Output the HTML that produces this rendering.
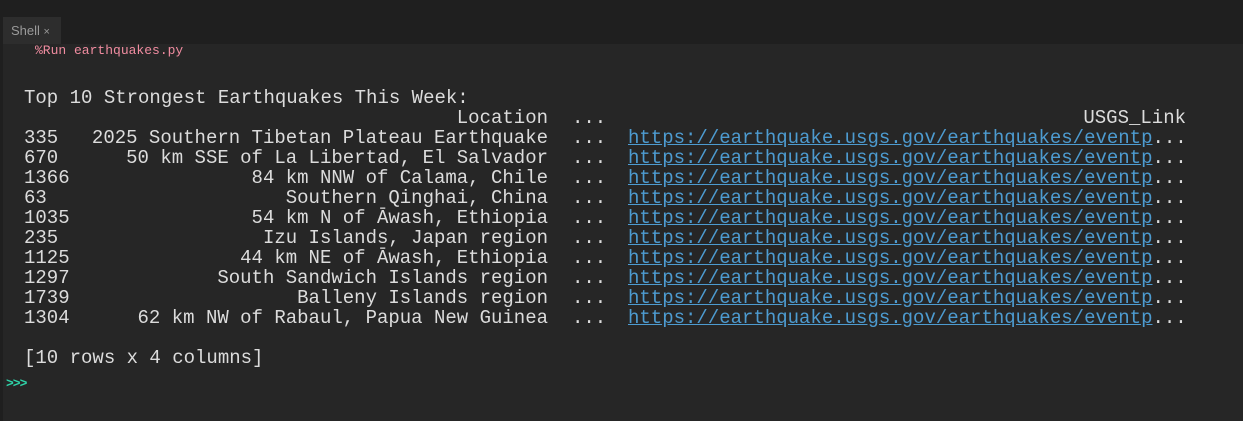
<!DOCTYPE html>
<html><head><meta charset="utf-8"><style>
html,body{margin:0;padding:0;width:1243px;height:421px;overflow:hidden;background:#1f1f1f;}
.tab{position:absolute;left:3px;top:17px;width:58px;height:28px;background:#2d2d2d;color:#9a9a9a;font:13px "Liberation Sans",sans-serif;line-height:28px;padding-left:8px;box-sizing:border-box;}
.main{position:absolute;left:3px;top:44px;right:0;bottom:0;background:#262626;}
.run{position:absolute;left:35px;top:43px;font:13px "Liberation Mono",monospace;color:#f08ca0;line-height:16px;}
.t{position:absolute;font:19px "Liberation Mono",monospace;line-height:20px;color:#dcdcdc;white-space:pre;}
.l{position:absolute;left:24px;}
.r{position:absolute;right:695px;text-align:right;}
.d{position:absolute;left:572px;}
.k{position:absolute;left:628px;}
a{color:#4d9bd0;text-decoration:underline;}
.pr{position:absolute;left:6px;top:376px;font:bold 13px "Liberation Mono",monospace;color:#2fd3a8;letter-spacing:-1px;}
.row{position:absolute;left:0;width:1243px;height:20px;}
</style></head><body>
<div class="tab">Shell <span style="font-size:11px">×</span></div>
<div class="main"></div>
<div class="run">%Run earthquakes.py</div>
<div class="t" style="left:24px;top:88px">Top 10 Strongest Earthquakes This Week:</div>
<div class="t row" style="top:108px"><span class="r">Location</span><span class="d">...</span><span style="position:absolute;right:57px">USGS_Link</span></div>
<div class="t row" style="top:128px"><span class="l">335</span><span class="r">2025 Southern Tibetan Plateau Earthquake</span><span class="d">...</span><span class="k"><a>https://earthquake.usgs.gov/earthquakes/eventp</a>...</span></div>
<div class="t row" style="top:148px"><span class="l">670</span><span class="r">50 km SSE of La Libertad, El Salvador</span><span class="d">...</span><span class="k"><a>https://earthquake.usgs.gov/earthquakes/eventp</a>...</span></div>
<div class="t row" style="top:168px"><span class="l">1366</span><span class="r">84 km NNW of Calama, Chile</span><span class="d">...</span><span class="k"><a>https://earthquake.usgs.gov/earthquakes/eventp</a>...</span></div>
<div class="t row" style="top:188px"><span class="l">63</span><span class="r">Southern Qinghai, China</span><span class="d">...</span><span class="k"><a>https://earthquake.usgs.gov/earthquakes/eventp</a>...</span></div>
<div class="t row" style="top:208px"><span class="l">1035</span><span class="r">54 km N of Āwash, Ethiopia</span><span class="d">...</span><span class="k"><a>https://earthquake.usgs.gov/earthquakes/eventp</a>...</span></div>
<div class="t row" style="top:228px"><span class="l">235</span><span class="r">Izu Islands, Japan region</span><span class="d">...</span><span class="k"><a>https://earthquake.usgs.gov/earthquakes/eventp</a>...</span></div>
<div class="t row" style="top:248px"><span class="l">1125</span><span class="r">44 km NE of Āwash, Ethiopia</span><span class="d">...</span><span class="k"><a>https://earthquake.usgs.gov/earthquakes/eventp</a>...</span></div>
<div class="t row" style="top:268px"><span class="l">1297</span><span class="r">South Sandwich Islands region</span><span class="d">...</span><span class="k"><a>https://earthquake.usgs.gov/earthquakes/eventp</a>...</span></div>
<div class="t row" style="top:288px"><span class="l">1739</span><span class="r">Balleny Islands region</span><span class="d">...</span><span class="k"><a>https://earthquake.usgs.gov/earthquakes/eventp</a>...</span></div>
<div class="t row" style="top:308px"><span class="l">1304</span><span class="r">62 km NW of Rabaul, Papua New Guinea</span><span class="d">...</span><span class="k"><a>https://earthquake.usgs.gov/earthquakes/eventp</a>...</span></div>
<div class="t" style="left:24px;top:348px">[10 rows x 4 columns]</div>
<div class="pr">&gt;&gt;&gt;</div>
</body></html>
